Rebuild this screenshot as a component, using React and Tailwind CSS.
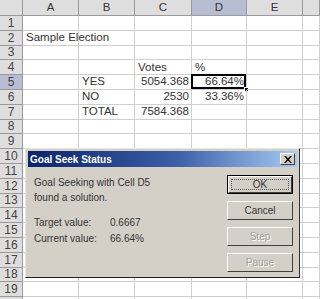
import React from 'react'

const COLS = ['A', 'B', 'C', 'D', 'E', '']
const ROWS = Array.from({ length: 20 }, (_, i) => i + 1)

// cell contents by row, then column
const DATA = {
  2: { A: { t: 'Sample Election' } },
  4: { C: { t: 'Votes' }, D: { t: '%' } },
  5: { B: { t: 'YES' }, C: { t: '5054.368', r: true }, D: { t: '66.64%', r: true } },
  6: { B: { t: 'NO' }, C: { t: '2530', r: true }, D: { t: '33.36%', r: true } },
  7: { B: { t: 'TOTAL' }, C: { t: '7584.368', r: true } },
}

export default function App() {
  return (
    <div className="relative w-[320px] h-[299px] overflow-hidden bg-white text-[#333]" style={{ fontFamily: '"Liberation Sans", Arial, sans-serif' }}>
      <div className="grid grid-cols-[23px_56px_56px_57px_55px_56px_1fr] grid-rows-[16px_repeat(20,14.8px)] text-[11.5px] leading-none">
        <div className="bg-[#dedede] border-r border-b border-[#9a9a9a]" />
        {COLS.map((c, i) => (
          <div key={i} className={`flex items-center justify-center border-r border-b border-[#9a9a9a] ${c === 'D' ? 'bg-[#b7bdd2]' : 'bg-[#dedede]'}`}>{c}</div>
        ))}
        {ROWS.map(r => (
          <React.Fragment key={r}>
            <div className={`flex items-center justify-center text-[12px] text-[#444] border-r border-b border-[#9a9a9a] ${r === 5 ? 'bg-[#b7bdd2]' : 'bg-[#dedede]'}`}>{r < 20 ? r : ''}</div>
            {COLS.map((c, i) => {
              const cell = DATA[r] && DATA[r][c]
              const active = r === 5 && c === 'D'
              return (
                <div key={i} className={`relative flex items-center border-r border-b border-[#cfcfcf] px-[2px] whitespace-nowrap ${cell && cell.r ? 'justify-end' : ''}`}>
                  {cell && <span className={cell.r ? '' : 'absolute left-[3px]'}>{cell.t}</span>}
                  {active && (
                    <>
                      <div className="absolute -left-[1px] -top-[1px] right-0 bottom-0 border-2 border-black" />
                      <div className="absolute -right-[3px] -bottom-[3px] w-[5px] h-[5px] bg-black border border-white" />
                    </>
                  )}
                </div>
              )
            })}
          </React.Fragment>
        ))}
      </div>

      <GoalSeekDialog />
    </div>
  )
}

function GoalSeekDialog() {
  return (
    <div className="absolute left-[25px] top-[148px] w-[275px] h-[130px] bg-[#d4d0c8] border border-t-[#e8e6e0] border-l-[#e8e6e0] border-r-[#303030] border-b-[#202020] p-[2px] flex flex-col" style={{ fontFamily: '"Liberation Sans", Tahoma, sans-serif' }}>
      <div className="h-[16px] flex items-center justify-between pl-[2px] pr-[2px] bg-[linear-gradient(90deg,#0a246a,#3b5fa8_55%,#a6caf0)]">
        <span className="text-white font-bold text-[10px]">Goal Seek Status</span>
        <button className="w-[15px] h-[12px] flex items-center justify-center bg-[#d4d0c8] border border-t-white border-l-white border-r-[#404040] border-b-[#404040]">
          <svg width="8" height="7" viewBox="0 0 8 7"><path d="M0 0h2l2 2.5L6 0h2L5 3.5 8 7H6L4 4.5 2 7H0l3-3.5z" fill="#000" /></svg>
        </button>
      </div>
      <div className="flex flex-1 text-[10px] text-[#333]">
        <div className="flex-1 pl-[6px] pt-[8px]">
          <div className="leading-[15px]">Goal Seeking with Cell D5</div>
          <div className="leading-[15px]">found a solution.</div>
          <div className="mt-[10px] flex leading-[16px]">
            <span className="w-[76px]">Target value:</span>
            <span>0.6667</span>
          </div>
          <div className="flex leading-[16px]">
            <span className="w-[76px]">Current value:</span>
            <span>66.64%</span>
          </div>
        </div>
        <div className="flex flex-col gap-[7px] pt-[8px] pr-[4px]">
          <Btn label="OK" def />
          <Btn label="Cancel" />
          <Btn label="Step" disabled />
          <Btn label="Pause" disabled />
        </div>
      </div>
    </div>
  )
}

function Btn({ label, def, disabled }) {
  return (
    <div className={`w-[66px] h-[19px] ${def ? 'border border-black' : ''}`}>
      <div className="relative w-full h-full flex items-center justify-center bg-[#d4d0c8] border border-t-white border-l-white border-r-[#404040] border-b-[#404040] text-[10px]">
        {def && <div className="absolute inset-[2px] border border-dotted border-[#555]" />}
        <span className={disabled ? 'text-[#a09d96] [text-shadow:1px_1px_0_#fff]' : 'text-[#333]'}>
          {label}
        </span>
      </div>
    </div>
  )
}
